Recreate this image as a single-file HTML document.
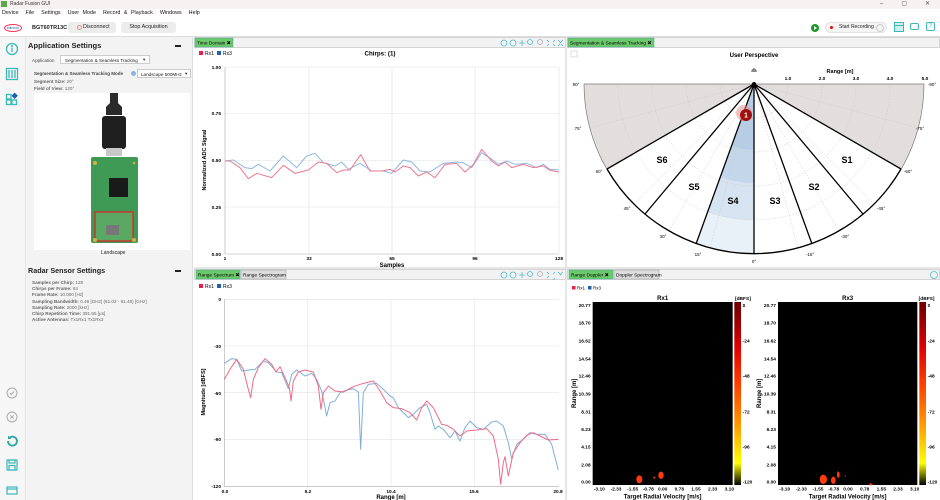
<!DOCTYPE html>
<html><head><meta charset="utf-8">
<style>
*{margin:0;padding:0;box-sizing:border-box}
body{width:940px;height:500px;overflow:hidden;background:#fff;font-family:"Liberation Sans",Arial,sans-serif;position:relative;color:#222}
.a{position:absolute;white-space:nowrap}
.t{font-size:5px}
</style></head><body>
<div class="a" style="left:0;top:0;width:940px;height:9px;background:#f7f1f1"></div>
<div class="a" style="left:1px;top:1px;width:6px;height:6px;background:#5aa84a"></div>
<div class="a t" style="left:10px;top:1px;color:#333">Radar Fusion GUI</div>
<div class="a" style="left:880px;top:0;font-size:6px;color:#555;letter-spacing:18px">–▢✕</div>
<div class="a" style="left:2px;top:10px;font-size:5.4px;color:#111;word-spacing:2px">Device &nbsp;File &nbsp;Settings &nbsp;User Mode &nbsp;Record &amp; Playback &nbsp;Windows &nbsp;Help</div>
<div class="a" style="left:4px;top:24px;width:18px;height:8px;border:1px solid #e35;border-radius:50%;font-size:3.5px;color:#1a5fb4;text-align:center;line-height:6px">infineon</div>
<div class="a" style="left:32px;top:25px;font-size:5.5px;font-weight:bold">BGT60TR13C</div>
<div class="a" style="left:68px;top:22px;width:48px;height:11px;background:#ececec;border-radius:3px;font-size:5.4px;line-height:11px;padding-left:15px">Disconnect</div>
<div class="a" style="left:77px;top:25px;width:5px;height:5px;border:1px solid #e88;border-radius:50%"></div>
<div class="a" style="left:121px;top:22px;width:55px;height:11px;background:#ececec;border-radius:3px;font-size:5.4px;line-height:11px;text-align:center">Stop Acquisition</div>
<div class="a" style="left:811px;top:24px;width:8px;height:8px;background:#1a9a2a;border-radius:50%"></div>
<div class="a" style="left:814px;top:26px;width:0;height:0;border-left:3px solid #fff;border-top:2px solid transparent;border-bottom:2px solid transparent"></div>
<div class="a" style="left:825px;top:22px;width:62px;height:11px;background:#f4f4f4;border:1px solid #e4e4e4;border-radius:6px;font-size:5px;line-height:9px;padding-left:13px">Start Recording</div>
<div class="a" style="left:830px;top:26px;width:3px;height:3px;background:#e00;border-radius:50%"></div>
<div class="a" style="left:876px;top:24px;width:8px;height:8px;border:1.5px solid #ccc;border-radius:50%"></div>
<div class="a" style="left:894px;top:22px;width:10px;height:10px;border:1.5px solid #3bb8b8;background:#cfeeee"></div>
<div class="a" style="left:894px;top:25px;width:10px;height:1px;background:#3bb8b8"></div>
<div class="a" style="left:910px;top:23px;width:9px;height:7px;border:1.5px solid #3bb8b8;border-radius:2px"></div>
<div class="a" style="left:926px;top:22px;width:9px;height:9px;border:1.5px solid #3bb8b8;border-radius:2px;font-size:5px;color:#3bb8b8;text-align:center;line-height:6px">?</div>
<div class="a" style="left:0;top:36px;width:940px;height:1px;background:#ddd"></div>

<div class="a" style="left:0;top:37px;width:26px;height:463px;background:#f6f6f6;border-right:1px solid #e6e6e6"></div>
<svg class="a" style="left:0;top:37px" width="26" height="463" viewBox="0 37 26 463">
<g fill="none" stroke="#3bb8b8" stroke-width="1.3">
<circle cx="12" cy="49" r="5.5"/><line x1="12" y1="47.5" x2="12" y2="52"/><circle cx="12" cy="46" r=".4" fill="#3bb8b8"/>
<rect x="6.5" y="68.5" width="11" height="11"/><line x1="9" y1="70" x2="9" y2="78"/><line x1="12" y1="70" x2="12" y2="78"/><line x1="15" y1="70" x2="15" y2="78"/>
<rect x="6.5" y="94.5" width="4.5" height="4.5"/><rect x="6.5" y="100" width="4.5" height="4.5"/><rect x="12" y="100" width="4.5" height="4.5"/>
</g>
<rect x="12.5" y="93.5" width="4.5" height="4.5" fill="#1e5fb4" transform="rotate(45 14.7 95.7)"/>
<g fill="none" stroke="#aaa" stroke-width="1">
<circle cx="12" cy="393" r="5"/><path d="M9.8 393l1.5 1.5 2.8-3"/>
<circle cx="12" cy="417" r="5"/><path d="M10.3 415.3l3.4 3.4M13.7 415.3l-3.4 3.4"/>
</g>
<path d="M8 441a4.5 4.5 0 1 0 2-3.6" fill="none" stroke="#2aa8a0" stroke-width="1.8"/><path d="M8 435.5v3.5h3.5z" fill="#2aa8a0"/>
<g fill="none" stroke="#3bb8b8" stroke-width="1.2"><rect x="7" y="460" width="10" height="10"/><rect x="9" y="460" width="6" height="3"/><rect x="9" y="465.5" width="6" height="4.5"/>
<rect x="7" y="487" width="10" height="7"/><line x1="7" y1="489" x2="17" y2="489"/></g>
</svg>
<div class="a" style="left:26px;top:37px;width:167px;height:463px;background:#f3f3f3;border-right:1px solid #ddd"></div>
<div class="a" style="left:28px;top:41px;font-size:7.6px;font-weight:bold">Application Settings</div>
<div class="a" style="left:175px;top:45px;width:6px;height:1.5px;background:#222"></div>
<div class="a" style="left:32px;top:57.5px;font-size:4.6px;color:#444">Application</div>
<div class="a" style="left:60px;top:55px;width:90px;height:9px;background:#fff;border:1px solid #ccc;padding:1.8px 0 0 4px;font-size:4.6px">Segmentation &amp; Seamless Tracking</div>
<div class="a" style="left:143px;top:57px;font-size:4.6px">▾</div>
<div class="a" style="left:34px;top:71px;font-size:4.5px;color:#444;font-weight:bold">Segmentation &amp; Seamless Tracking Mode</div>
<div class="a" style="left:131px;top:71px;width:5px;height:5px;border-radius:50%;background:#8ab8e0"></div>
<div class="a" style="left:137px;top:69px;width:54px;height:9px;background:#fff;border:1px solid #ccc;padding:1.8px 0 0 3px;font-size:4.6px">Landscape 500MHz</div>
<div class="a" style="left:185px;top:71px;font-size:4.6px">▾</div>
<div class="a" style="left:34px;top:79px;font-size:4.6px;color:#666"><b>Segment Size:</b> 20°</div>
<div class="a" style="left:34px;top:86px;font-size:4.6px;color:#666"><b>Field of View:</b> 120°</div>
<div class="a" style="left:34px;top:93px;width:156px;height:157px;background:#fff"></div>
<svg class="a" style="left:34px;top:93px" width="156" height="157" viewBox="34 93 156 157">
<path d="M110 93h8v10l4 4v8h-16v-8l4-4z" fill="#2a2a2a"/>
<rect x="102" y="116" width="24" height="33" rx="3" fill="#1f1f1f"/>
<rect x="106" y="148" width="16" height="8" fill="#c8c8c8"/>
<rect x="91" y="157" width="47" height="86" rx="2" fill="#3f9a55"/>
<rect x="109" y="178" width="19" height="19" fill="#1a1a1a"/>
<rect x="95" y="212" width="38" height="29" fill="#5aa864" stroke="#e02020" stroke-width="1.2"/>
<rect x="106" y="225" width="13" height="10" fill="#777"/>
<g fill="#d4b040"><circle cx="95" cy="163" r="2"/><circle cx="134" cy="163" r="1.3"/><circle cx="95" cy="240" r="2"/><circle cx="134" cy="240" r="2"/></g>
</svg>
<div class="a t" style="left:101px;top:250px">Landscape</div>
<div class="a" style="left:28px;top:266px;font-size:7.2px;font-weight:bold">Radar Sensor Settings</div>
<div class="a" style="left:175px;top:270px;width:6px;height:1.5px;background:#222"></div>
<div class="a" style="left:32px;top:280px;font-size:4.6px;color:#666;line-height:6.2px">
<b>Samples per Chirp:</b> 128<br><b>Chirps per Frame:</b> 64<br><b>Frame Rate:</b> 10.000 [Hz]<br><b>Sampling Bandwidth:</b> 0.46 [GHz] (61.02 - 61.48) [GHz]<br><b>Sampling Rate:</b> 2000 [kHz]<br><b>Chirp Repetition Time:</b> 391.55 [µs]<br><b>Active Antennas:</b> Tx1Rx1 Tx1Rx3</div>

<svg class="a" style="left:0;top:0" width="940" height="500" viewBox="0 0 940 500" font-family="Liberation Sans, Arial, sans-serif">
<g fill="#f2f2f2" stroke="#bbb" stroke-width=".6">
<rect x="194.5" y="37.5" width="371" height="10"/><rect x="567.5" y="37.5" width="372" height="10"/>
<rect x="194.5" y="269.5" width="371" height="10"/><rect x="567.5" y="269.5" width="372" height="10"/>
</g>
<line x1="566" y1="37" x2="566" y2="500" stroke="#ddd" stroke-width="1.5"/>
<line x1="194" y1="268" x2="940" y2="268" stroke="#ddd" stroke-width="1.5"/>
<g font-size="4.8">
<rect x="195" y="38" width="38" height="9" fill="#6cc86a" stroke="#4a9" stroke-width=".5"/><text x="197" y="44.5">Time Domain ✖</text>
<rect x="568" y="38" width="86" height="9" fill="#6cc86a" stroke="#4a9" stroke-width=".5"/><text x="570" y="44.5">Segmentation &amp; Seamless Tracking ✖</text>
<rect x="196" y="270" width="44" height="9" fill="#6cc86a" stroke="#4a9" stroke-width=".5"/><text x="198" y="276.5">Range Spectrum ✖</text>
<rect x="241" y="270" width="45" height="9" fill="#ddd" stroke="#999" stroke-width=".5"/><text x="243" y="276.5">Range Spectrogram</text>
<rect x="569" y="270" width="44" height="9" fill="#6cc86a" stroke="#4a9" stroke-width=".5"/><text x="571" y="276.5">Range Doppler ✖</text>
<rect x="614" y="270" width="45" height="9" fill="#ddd" stroke="#999" stroke-width=".5"/><text x="616" y="276.5">Doppler Spectrogram</text>
</g>
<g fill="none" stroke="#4bbccc" stroke-width=".8">
<circle cx="504" cy="43" r="3"/><circle cx="513" cy="43" r="3"/><path d="M519 43h6M522 40v6"/><circle cx="530" cy="42" r="2.5"/><circle cx="540" cy="42" r="2.5" stroke="#aaa"/><path d="M547 40l2 2M555 40l-2 2M547 46l2-2M555 46l-2-2M558 40l3 3M563 40l-3 3M558 46l2-2M563 46l-2-2"/>
<circle cx="504" cy="275" r="3"/><circle cx="513" cy="275" r="3"/><path d="M519 275h6M522 272v6"/><circle cx="530" cy="274" r="2.5"/><circle cx="540" cy="274" r="2.5" stroke="#aaa"/><path d="M547 272l2 2M555 272l-2 2M547 278l2-2M555 278l-2 2M558 272l3 3M563 272l-3 3"/>
<circle cx="934" cy="275" r="3.5"/>
</g>
<rect x="571" y="51" width="6" height="6" fill="#fff" stroke="#bbb" stroke-width=".5"/>

<g font-size="5"><rect x="199" y="51" width="4" height="4" fill="#e8204a"/><text x="205" y="55">Rx1</text><rect x="217" y="51" width="4" height="4" fill="#2060b0"/><text x="223" y="55">Rx3</text>
<rect x="199" y="284" width="4" height="4" fill="#e8204a"/><text x="205" y="288">Rx1</text><rect x="217" y="284" width="4" height="4" fill="#2060b0"/><text x="223" y="288">Rx3</text>
<rect x="572" y="286" width="3.5" height="3.5" fill="#e8204a"/><text x="577" y="289.5" font-size="4.5">Rx1</text><rect x="588" y="286" width="3.5" height="3.5" fill="#2060b0"/><text x="593" y="289.5" font-size="4.5">Rx3</text></g>

<text x="380" y="55.5" font-size="6.2" font-weight="bold" text-anchor="middle">Chirps: (1)</text>
<g stroke="#e2e2e2" stroke-width=".6"><path d="M225 67h334M225 113.5h334M225 160.5h334M225 207h334M309 67v187M392 67v187M475 67v187M559 67v187"/></g>
<path d="M225 67v187h334" fill="none" stroke="#aaa" stroke-width=".6"/>
<g font-size="4.8" font-weight="bold" text-anchor="end"><text x="221" y="69">1.00</text><text x="221" y="115">0.75</text><text x="221" y="162">0.50</text><text x="221" y="209">0.25</text><text x="221" y="256">0.00</text></g>
<g font-size="4.8" font-weight="bold" text-anchor="middle"><text x="225" y="260">1</text><text x="309" y="260">33</text><text x="392" y="260">65</text><text x="475" y="260">96</text><text x="559" y="260">128</text></g>
<text x="392" y="267" font-size="6" font-weight="bold" text-anchor="middle">Samples</text>
<text transform="translate(206 160) rotate(-90)" font-size="5.5" font-weight="bold" text-anchor="middle">Normalized ADC Signal</text>
<g transform="translate(190 36) scale(.33333)" fill="none" stroke-width="3" stroke-linejoin="round">
<polyline stroke="#8fb8e0" points="105,375 130,372 165,395 185,398 205,385 240,405 280,360 320,395 350,360 375,352 400,380 435,390 455,378 475,400 510,382 545,405 580,405 605,412 640,372 665,378 690,405 720,408 760,382 800,378 820,380 845,395 875,350 905,370 925,385 950,375 975,385 1010,382 1040,395 1060,385 1080,400 1107,402"/>
<polyline stroke="#ef7890" points="105,375 120,375 150,395 175,428 200,412 245,425 280,388 315,412 355,402 385,378 410,382 440,410 460,402 480,402 512,356 540,405 575,405 600,400 615,408 640,390 660,395 685,420 710,408 735,425 765,385 800,382 825,408 850,385 875,340 905,375 925,390 945,378 965,395 1000,385 1030,395 1060,390 1080,403 1107,408"/>
</g>

<g stroke="#e2e2e2" stroke-width=".6"><path d="M224 299.3h335M224 346h335M224 392.7h335M224 439.3h335M307.7 299.3v187M391 299.3v187M474.3 299.3v187"/></g>
<path d="M224.3 299.3v187h334.7" fill="none" stroke="#aaa" stroke-width=".6"/>
<g font-size="4.8" font-weight="bold" text-anchor="end"><text x="221" y="301">0</text><text x="221" y="348">-30</text><text x="221" y="395">-60</text><text x="221" y="441">-90</text><text x="221" y="488">-120</text></g>
<g font-size="4.8" font-weight="bold" text-anchor="middle"><text x="225" y="493">0.0</text><text x="308" y="493">5.2</text><text x="391" y="493">10.4</text><text x="474" y="493">15.6</text><text x="558" y="493">20.8</text></g>
<text x="391" y="499" font-size="6" font-weight="bold" text-anchor="middle">Range [m]</text>
<text transform="translate(205 392) rotate(-90)" font-size="5.5" font-weight="bold" text-anchor="middle">Magnitude [dBFS]</text>
<g transform="translate(190 266) scale(.33333)" fill="none" stroke-width="3" stroke-linejoin="round">
<polyline stroke="#7fafd8" points="103,292 125,278 140,280 155,315 175,312 195,310 220,285 235,290 260,318 275,320 295,368 305,325 320,312 345,330 365,322 380,340 395,375 410,450 420,410 435,405 450,380 470,372 490,368 505,378 512,550 520,380 535,355 560,352 580,370 600,390 610,395 625,425 640,440 655,455 670,445 690,425 710,415 720,440 735,490 745,480 760,490 780,515 795,495 810,525 825,485 840,465 860,485 880,490 905,468 920,465 940,480 955,530 965,578 980,535 1000,520 1020,500 1040,505 1065,505 1085,535 1105,612"/>
<polyline stroke="#ef6a88" points="103,340 120,310 140,280 160,310 175,370 182,395 190,340 205,305 225,278 245,295 258,318 270,302 285,335 298,365 303,405 310,345 325,318 345,312 370,318 385,360 393,430 400,380 415,360 435,375 460,378 490,362 520,352 550,345 570,375 590,410 610,425 635,428 660,440 680,462 695,425 710,405 730,425 755,475 770,478 790,490 810,510 830,495 860,492 890,488 910,510 925,580 932,655 940,590 945,572 955,630 970,560 990,530 1010,508 1030,500 1050,510 1075,522 1105,520"/>
</g>

<text x="754" y="57" font-size="6" font-weight="bold" text-anchor="middle">User Perspective</text>
<text x="840" y="73" font-size="5.5" font-weight="bold" text-anchor="middle">Range [m]</text>
<g font-size="4.8" font-weight="bold" text-anchor="middle"><text x="788" y="80">1.0</text><text x="822" y="80">2.0</text><text x="856" y="80">3.0</text><text x="890" y="80">4.0</text><text x="925" y="80">5.0</text></g>
<path d="M751 72h6l-1-3h-4zM753 69a1 1 0 1 1 2 0" fill="#888"/>
<path d="M584 84A170 170 0 0 0 924 84Z" fill="#e2dede"/>
<path d="M754 84L607 169A170 170 0 0 0 901 169Z" fill="#fff"/>
<path d="M754 84L695.9 243.8A170 170 0 0 0 754 254Z" fill="#e8f0f8"/>
<path d="M754 84L707.5 211.8A136 136 0 0 0 754 220Z" fill="#d6e4f1"/>
<path d="M754 84L720.1 177.1A99 99 0 0 0 754 183Z" fill="#c4d7ea"/>
<path d="M754 84L731.4 146A66 66 0 0 0 754 150Z" fill="#b6cde5"/>
<g fill="none" stroke="#c8c8c8" stroke-width=".5" stroke-dasharray="1.5 1.5">
<path d="M720 84A34 34 0 0 0 788 84M686 84A68 68 0 0 0 822 84M652 84A102 102 0 0 0 856 84M618 84A136 136 0 0 0 890 84"/>
<path d="M754 84L590 128M754 84L607 169M754 84L634 204M754 84L669 231M754 84L710 248M754 84L798 248M754 84L839 231M754 84L874 204M754 84L918 128"/>
</g>
<path d="M584 84A170 170 0 0 0 924 84H584" fill="none" stroke="#777" stroke-width=".7"/>
<g stroke="#000" stroke-width="1.3" fill="none">
<path d="M754 84L607 169M754 84L645 214M754 84L696 244M754 84V254M754 84L812 244M754 84L863 214M754 84L901 169"/>
<path d="M607 169A170 170 0 0 0 901 169"/>
</g>
<circle cx="754" cy="84" r="2" fill="#000"/>
<g font-size="4.5" text-anchor="middle"><text x="576" y="86">90°</text><text x="578" y="130">75°</text><text x="599" y="173">60°</text><text x="627" y="210">45°</text><text x="663" y="238">30°</text><text x="698" y="256">15°</text><text x="754" y="263">0°</text><text x="810" y="256">-15°</text><text x="845" y="238">-30°</text><text x="881" y="210">-45°</text><text x="908" y="173">-60°</text><text x="920" y="130">-75°</text><text x="932" y="86">-90°</text></g>
<g font-size="9" font-weight="bold" text-anchor="middle"><text x="662" y="163">S6</text><text x="694" y="190">S5</text><text x="733" y="204">S4</text><text x="775" y="204">S3</text><text x="814" y="190">S2</text><text x="847" y="163">S1</text></g>
<circle cx="744" cy="113" r="8" fill="#e88" opacity=".5"/>
<circle cx="746" cy="115" r="6" fill="#a01010"/>
<text x="746" y="117.5" font-size="7" font-weight="bold" fill="#fff" text-anchor="middle">1</text>

<defs><linearGradient id="cb" x1="0" y1="0" x2="0" y2="1"><stop offset="0" stop-color="#6a0000"/><stop offset=".25" stop-color="#e00000"/><stop offset=".45" stop-color="#ff4000"/><stop offset=".65" stop-color="#ff9000"/><stop offset=".88" stop-color="#ffff00"/><stop offset="1" stop-color="#000"/></linearGradient></defs>
<g transform="translate(566 266) scale(.33333)">
<rect x="80" y="108" width="420" height="549" fill="#000"/><rect x="505" y="108" width="20" height="549" fill="url(#cb)"/>
<rect x="636" y="108" width="418" height="549" fill="#000"/><rect x="1060" y="108" width="20" height="549" fill="url(#cb)"/>
<g fill="#ff3a10"><ellipse cx="220" cy="640" rx="9" ry="12"/><ellipse cx="285" cy="628" rx="8" ry="11"/><circle cx="265" cy="635" r="3"/>
<ellipse cx="772" cy="640" rx="11" ry="14"/><ellipse cx="802" cy="643" rx="7" ry="11"/><ellipse cx="817" cy="626" rx="4" ry="10"/><circle cx="838" cy="630" r="2"/><ellipse cx="915" cy="655" rx="5" ry="3"/></g>
<g font-size="14.5" font-weight="bold" text-anchor="end">
<text x="74" y="123">20.77</text><text x="74" y="176">18.70</text><text x="74" y="230">16.62</text><text x="74" y="284">14.54</text><text x="74" y="335">12.46</text><text x="74" y="388">10.39</text><text x="74" y="442">8.31</text><text x="74" y="495">6.23</text><text x="74" y="548">4.15</text><text x="74" y="602">2.08</text><text x="74" y="653">0.00</text>
<text x="630" y="123">20.77</text><text x="630" y="176">18.70</text><text x="630" y="230">16.62</text><text x="630" y="284">14.54</text><text x="630" y="335">12.46</text><text x="630" y="388">10.39</text><text x="630" y="442">8.31</text><text x="630" y="495">6.23</text><text x="630" y="548">4.15</text><text x="630" y="602">2.08</text><text x="630" y="653">0.00</text>
</g>
<g font-size="14.5" font-weight="bold">
<text x="530" y="123">0</text><text x="530" y="230">-24</text><text x="530" y="335">-48</text><text x="530" y="442">-72</text><text x="530" y="548">-96</text><text x="530" y="653">-120</text>
<text x="1085" y="123">0</text><text x="1085" y="230">-24</text><text x="1085" y="335">-48</text><text x="1085" y="442">-72</text><text x="1085" y="548">-96</text><text x="1085" y="653">-120</text>
<text x="507" y="102">[dBFS]</text><text x="1058" y="102">[dBFS]</text>
</g>
<g font-size="14.5" font-weight="bold" text-anchor="middle">
<text x="100" y="673">-3.10</text><text x="150" y="673">-2.33</text><text x="200" y="673">-1.55</text><text x="247" y="673">-0.78</text><text x="290" y="673">0.00</text><text x="340" y="673">0.78</text><text x="390" y="673">1.55</text><text x="440" y="673">2.33</text><text x="490" y="673">3.10</text>
<text x="656" y="673">-3.10</text><text x="706" y="673">-2.33</text><text x="756" y="673">-1.55</text><text x="803" y="673">-0.78</text><text x="846" y="673">0.00</text><text x="896" y="673">0.78</text><text x="946" y="673">1.55</text><text x="996" y="673">2.33</text><text x="1046" y="673">3.10</text>
</g>
<g font-size="18" font-weight="bold" text-anchor="middle"><text x="290" y="102">Rx1</text><text x="845" y="102">Rx3</text>
<text x="290" y="698">Target Radial Velocity [m/s]</text><text x="845" y="698">Target Radial Velocity [m/s]</text>
<text transform="translate(30 382) rotate(-90)">Range [m]</text><text transform="translate(585 382) rotate(-90)">Range [m]</text></g>
</g>
</svg>
</body></html>
